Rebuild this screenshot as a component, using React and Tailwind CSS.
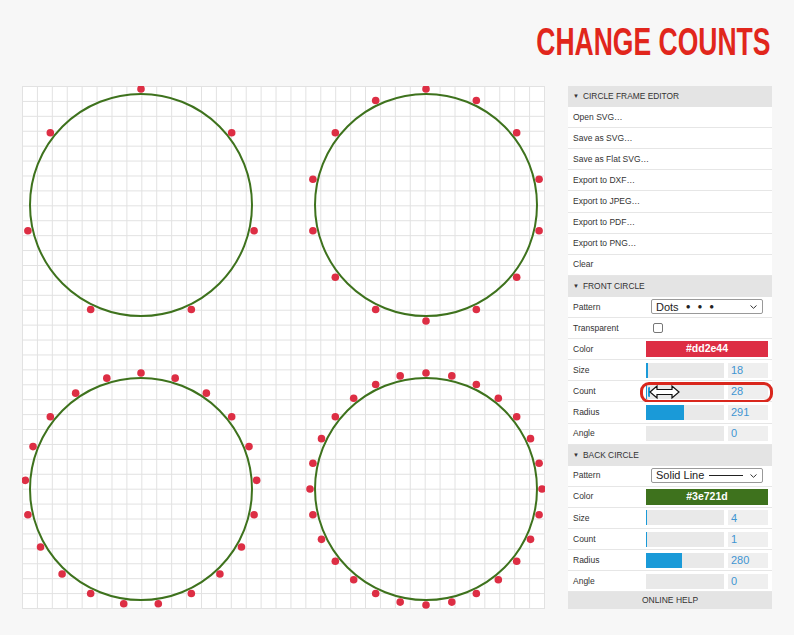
import { useMemo } from 'react';

const CELL = 522 / 35

function Ring({ cx, cy, count }) {
    const dots = []
    for (let i = 0; i < count; i++) {
        const a = (i * 2 * Math.PI) / count
        dots.push([cx + 116 * Math.sin(a), cy - 116 * Math.cos(a)])
    }
    return (
        <g>
            <circle cx={cx} cy={cy} r={111} fill="none" stroke="#3e721d" strokeWidth="2" />
            {dots.map(([x, y], i) => (
                <circle key={i} cx={x} cy={y} r={3.8} fill="#dd2e44" />
            ))}
        </g>
    )
}

function Canvas() {
    const lines = useMemo(() => {
        const l = []
        for (let i = 0; i <= 35; i++) l.push(0.5 + i * CELL)
        return l
    }, [])
    return (
        <div className="w-[523px] h-[523px] bg-white">
            <svg width="523" height="523" viewBox="0 0 523 523">
                {lines.map((p, i) => (
                    <g key={i}>
                        <line x1={p} y1="0" x2={p} y2="523" stroke="#e2e2e2" strokeWidth="1" />
                        <line x1="0" y1={p} x2="523" y2={p} stroke="#e2e2e2" strokeWidth="1" />
                    </g>
                ))}
                <Ring cx={119} cy={119} count={7} />
                <Ring cx={404} cy={119} count={14} />
                <Ring cx={119} cy={403} count={21} />
                <Ring cx={404} cy={403} count={28} />
            </svg>
        </div>
    )
}

function Header({ title }) {
    return (
        <div className="flex h-[21.1px] items-center bg-[#e4e4e4] pl-[5px] text-[8.4px] text-[#333]">
            <span className="mr-[4px] text-[6px]">▼</span>
            <span>{title}</span>
        </div>
    )
}

function Row({ label, children }) {
    return (
        <div className="relative flex h-[21.1px] items-center border-b border-[#e6e6e6] bg-white">
            <div className="w-[78px] shrink-0 whitespace-nowrap pl-[5px] text-[8.5px] text-[#333]">{label}</div>
            <div className="flex flex-1 items-center pr-[4px]">{children}</div>
        </div>
    )
}

function Slider({ value, max }) {
    const w = value > 0 ? Math.max(1, (value / max) * 78) : 0
    return (
        <div className="flex items-center gap-[4px]">
            <div className="h-[15px] w-[78px] bg-[#e9e9e9]">
                <div className="h-full bg-[#1a9ad8]" style={{ width: w }} />
            </div>
            <div className="flex h-[15px] w-[40px] items-center bg-[#efefef] pl-[3px] text-[11px] text-[#3f95d2]">{value}</div>
        </div>
    )
}

function ColorBar({ color }) {
    return (
        <div className="flex h-[16px] w-[122px] items-center justify-center text-[10.5px] font-bold text-white" style={{ backgroundColor: color }}>
            {color}
        </div>
    )
}

function Select({ children }) {
    return (
        <div className="ml-[5px] flex h-[15px] w-[112px] items-center justify-between rounded-[2px] border border-[#999] bg-white pl-[4px] pr-[5px] text-[11px] text-[#222]">
            <span className="flex items-center">{children}</span>
            <svg width="7" height="4" viewBox="0 0 7 4">
                <path d="M0.5 0.5 L3.5 3.3 L6.5 0.5" fill="none" stroke="#333" strokeWidth="1" />
            </svg>
        </div>
    )
}

export default function App() {
    const menu = ['Open SVG…', 'Save as SVG…', 'Save as Flat SVG…', 'Export to DXF…', 'Export to JPEG…', 'Export to PDF…', 'Export to PNG…', 'Clear']
    return (
        <div className="w-[794px] h-[635px] overflow-hidden bg-[#f7f7f7]" style={{ fontFamily: '"Liberation Sans", Arial, sans-serif' }}>
            {/* title */}
            <div className="flex h-[86px] justify-end pr-[23px] pt-[22px]">
                <h1 className="origin-right scale-x-[0.68] text-[39px] font-bold leading-none text-[#e1261c]">CHANGE COUNTS</h1>
            </div>

            <div className="flex">
                <div className="ml-[22px]">
                    <Canvas />
                </div>

                {/* editor panel */}
                <div className="ml-[23px] w-[204px]">
                    <Header title="CIRCLE FRAME EDITOR" />
                    {menu.map((m) => (
                        <Row key={m} label={m} />
                    ))}

                    <Header title="FRONT CIRCLE" />
                    <Row label="Pattern">
                        <Select>
                            Dots<span className="ml-[7px] tracking-[7px] text-[8px]">●●●</span>
                        </Select>
                    </Row>
                    <Row label="Transparent">
                        <div className="ml-[7px] h-[10px] w-[10px] rounded-[2px] border border-[#777] bg-white" />
                    </Row>
                    <Row label="Color">
                        <ColorBar color="#dd2e44" />
                    </Row>
                    <Row label="Size">
                        <Slider value={18} max={700} />
                    </Row>
                    <Row label="Count">
                        <Slider value={28} max={100000} />
                        <div className="absolute left-[72px] top-[1px] h-[21px] w-[133px] rounded-[9px] border-[3px] border-[#d9271d]" />
                        <svg className="absolute left-[80px] top-[3px]" width="34" height="16" viewBox="0 0 34 16">
                            <path d="M2 3 A5 5 0 0 0 2 13 Z" fill="#1a9ad8" />
                            <path d="M2 8 L9 2 L9 5.5 L24 5.5 L24 2 L31 8 L24 14 L24 10.5 L9 10.5 L9 14 Z" fill="white" stroke="#111" strokeWidth="1.2" strokeLinejoin="miter" />
                        </svg>
                    </Row>
                    <Row label="Radius">
                        <Slider value={291} max={600} />
                    </Row>
                    <Row label="Angle">
                        <Slider value={0} max={360} />
                    </Row>

                    <Header title="BACK CIRCLE" />
                    <Row label="Pattern">
                        <Select>
                            Solid Line<span className="ml-[5px] inline-block h-px w-[34px] bg-[#222]" />
                        </Select>
                    </Row>
                    <Row label="Color">
                        <ColorBar color="#3e721d" />
                    </Row>
                    <Row label="Size">
                        <Slider value={4} max={1000} />
                    </Row>
                    <Row label="Count">
                        <Slider value={1} max={1000} />
                    </Row>
                    <Row label="Radius">
                        <Slider value={280} max={600} />
                    </Row>
                    <Row label="Angle">
                        <Slider value={0} max={360} />
                    </Row>
                    <div className="flex h-[17px] items-center justify-center bg-[#e4e4e4] text-[8.5px] text-[#333]">ONLINE HELP</div>
                </div>
            </div>
        </div>
    )
}
